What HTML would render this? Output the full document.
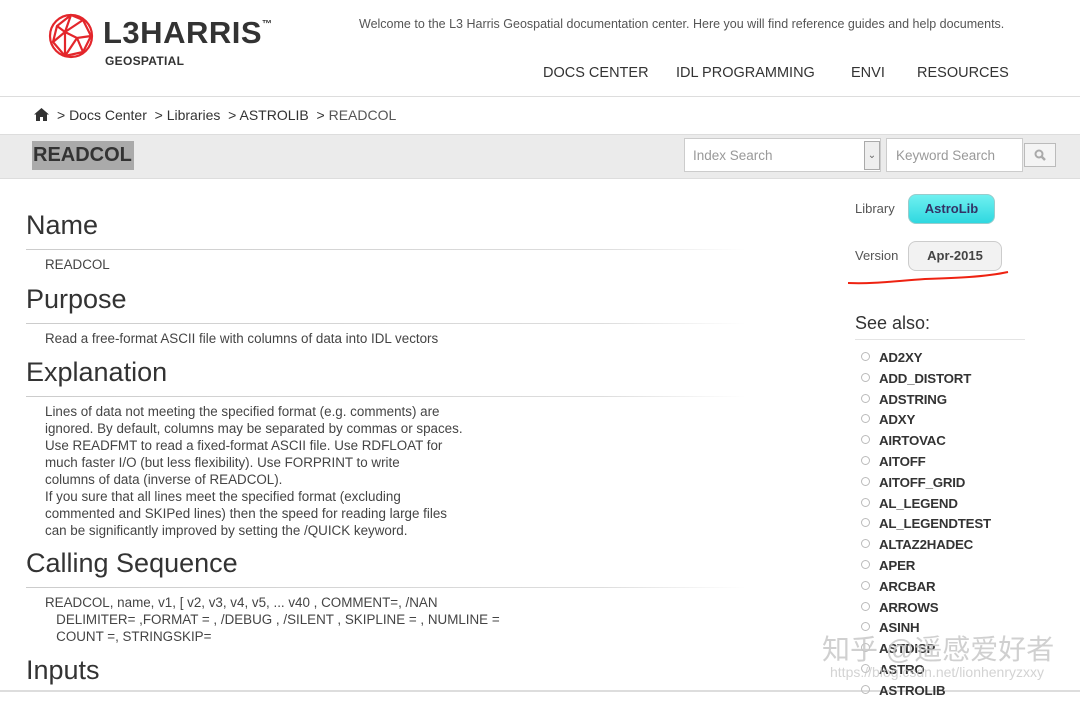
<!DOCTYPE html>
<html><head><meta charset="utf-8"><style>
*{margin:0;padding:0;box-sizing:border-box}
body{width:1080px;height:692px;overflow:hidden;background:#fff;font-family:"Liberation Sans",sans-serif;color:#333;position:relative}
.a{position:absolute;white-space:nowrap}
h2{position:absolute;left:26px;font-weight:normal;font-size:27px;color:#333;white-space:nowrap}
.hl{position:absolute;left:26px;width:720px;height:1px;background:linear-gradient(90deg,#ccc,#ddd 80%,#fff)}
.t{position:absolute;left:45px;font-size:13.4px;line-height:17px;color:#444}
.nav{font-size:14.5px;color:#333;top:65px}
ul{position:absolute;left:861px;top:348px;list-style:none}
li{font-size:13.3px;height:20.8px;line-height:20.8px;color:#333;font-weight:bold;letter-spacing:-0.2px}
li:before{content:"";display:inline-block;width:7px;height:7px;border:1px solid #bbb;border-radius:50%;margin-right:9px;vertical-align:1px}
</style></head><body>
<svg class="a" style="left:47px;top:12px" width="48" height="48" viewBox="0 0 48 48" fill="none" stroke="#e3262b" stroke-width="2.2">
<circle cx="24" cy="24" r="21"/><path d="M24 3L10 14L6 30L18 44L36 40L44 24L36 8ZM24 3L18 20L10 14M18 20L36 8M18 20L30 26L44 24M30 26L36 40M30 26L18 44M18 20L6 30M18 20L18 44"/></svg>
<div class="a" style="left:103px;top:15px;font-size:31px;font-weight:bold;color:#333;letter-spacing:0.5px">L3HARRIS<span style="font-size:10px;vertical-align:16px">™</span></div>
<div class="a" style="left:105px;top:54px;font-size:12px;color:#333;font-weight:bold;letter-spacing:0.3px">GEOSPATIAL</div>
<div class="a" style="left:359px;top:17px;font-size:12.5px;color:#555">Welcome to the L3 Harris Geospatial documentation center. Here you will find reference guides and help documents.</div>
<div class="a nav" style="left:543px">DOCS CENTER</div>
<div class="a nav" style="left:676px">IDL PROGRAMMING</div>
<div class="a nav" style="left:851px">ENVI</div>
<div class="a nav" style="left:917px">RESOURCES</div>
<div class="a" style="left:0;top:96px;width:1080px;height:1px;background:#ddd"></div>
<svg class="a" style="left:34px;top:108px" width="15" height="13" viewBox="0 0 15 13"><path d="M7.5 0L0 6.5H2V13H6V9H9V13H13V6.5H15Z" fill="#333"/></svg>
<div class="a" style="left:57px;top:107px;font-size:14px;color:#333">&gt; Docs Center &nbsp;&gt; Libraries &nbsp;&gt; ASTROLIB &nbsp;&gt; <span style="color:#555">READCOL</span></div>
<div class="a" style="left:0;top:134px;width:1080px;height:45px;background:#ebebeb;border-top:1px solid #ddd;border-bottom:1px solid #ddd"></div>
<div class="a" style="left:32px;top:141px;height:29px;width:102px;background:#aaa"></div>
<div class="a" style="left:33px;top:144px;font-size:20px;font-weight:bold;color:#333">READCOL</div>
<div class="a" style="left:684px;top:138px;width:197px;height:34px;background:#fff;border:1px solid #ccc"></div>
<div class="a" style="left:693px;top:148px;font-size:13.5px;color:#999">Index Search</div>
<div class="a" style="left:864px;top:141px;width:16px;height:29px;border:1px solid #aaa;background:#eee;font-size:10px;text-align:center;line-height:27px;color:#666">⌄</div>
<div class="a" style="left:886px;top:138px;width:137px;height:34px;background:#fff;border:1px solid #ccc"></div>
<div class="a" style="left:896px;top:148px;font-size:13.5px;color:#999">Keyword Search</div>
<div class="a" style="left:1024px;top:143px;width:32px;height:24px;background:#f4f4f4;border:1px solid #bbb"></div>
<svg class="a" style="left:1033px;top:148px" width="14" height="14"><circle cx="6" cy="6" r="3.5" stroke="#aaa" stroke-width="2" fill="none"/><path d="M8.5 8.5L12 12" stroke="#aaa" stroke-width="2.5"/></svg>
<h2 style="top:210px">Name</h2><div class="hl" style="top:249px"></div>
<div class="t" style="top:256px">READCOL</div>
<h2 style="top:284px">Purpose</h2><div class="hl" style="top:323px"></div>
<div class="t" style="top:330px">Read a free-format ASCII file with columns of data into IDL vectors</div>
<h2 style="top:357px">Explanation</h2><div class="hl" style="top:396px"></div>
<div class="t" style="top:403px">Lines of data not meeting the specified format (e.g. comments) are<br>ignored. By default, columns may be separated by commas or spaces.<br>Use READFMT to read a fixed-format ASCII file. Use RDFLOAT for<br>much faster I/O (but less flexibility). Use FORPRINT to write<br>columns of data (inverse of READCOL).<br>If you sure that all lines meet the specified format (excluding<br>commented and SKIPed lines) then the speed for reading large files<br>can be significantly improved by setting the /QUICK keyword.</div>
<h2 style="top:548px">Calling Sequence</h2><div class="hl" style="top:587px"></div>
<div class="t" style="top:594px">READCOL, name, v1, [ v2, v3, v4, v5, ... v40 , COMMENT=, /NAN<br>&nbsp;&nbsp;&nbsp;DELIMITER= ,FORMAT = , /DEBUG , /SILENT , SKIPLINE = , NUMLINE =<br>&nbsp;&nbsp;&nbsp;COUNT =, STRINGSKIP=</div>
<h2 style="top:655px">Inputs</h2>
<div class="a" style="left:0;top:690px;width:1080px;height:2px;background:#ddd"></div>
<div class="a" style="left:855px;top:201px;font-size:13px;color:#555">Library</div>
<div class="a" style="left:908px;top:194px;width:87px;height:30px;border-radius:8px;background:linear-gradient(#6ff0f0,#2fd8e0);border:1px solid #9cc;font-size:13px;font-weight:bold;color:#336;text-align:center;line-height:28px">AstroLib</div>
<div class="a" style="left:855px;top:248px;font-size:13px;color:#555">Version</div>
<div class="a" style="left:908px;top:241px;width:94px;height:30px;border-radius:8px;background:#f2f2f2;border:1px solid #ccc;font-size:13px;font-weight:bold;color:#444;text-align:center;line-height:28px">Apr-2015</div>
<svg class="a" style="left:845px;top:268px" width="170" height="20"><path d="M3 15C30 16 50 13 80 11C110 10 140 9 163 4" stroke="#e21" stroke-width="2" fill="none"/></svg>
<div class="a" style="left:855px;top:313px;font-size:18px;color:#333">See also:</div>
<div class="a" style="left:855px;top:339px;width:170px;height:1px;background:#e4e4e4"></div>
<ul><li>AD2XY</li><li>ADD_DISTORT</li><li>ADSTRING</li><li>ADXY</li><li>AIRTOVAC</li><li>AITOFF</li><li>AITOFF_GRID</li><li>AL_LEGEND</li><li>AL_LEGENDTEST</li><li>ALTAZ2HADEC</li><li>APER</li><li>ARCBAR</li><li>ARROWS</li><li>ASINH</li><li>ASTDISP</li><li>ASTRO</li><li>ASTROLIB</li></ul>
<div class="a" style="left:822px;top:628px;font-size:28px;color:rgba(200,200,200,.85);font-family:'Liberation Sans','Noto Sans CJK SC',sans-serif">知乎 @遥感爱好者</div>
<div class="a" style="left:830px;top:664px;font-size:14px;color:rgba(200,200,200,.8)">https://blog.csdn.net/lionhenryzxxy</div>
</body></html>
